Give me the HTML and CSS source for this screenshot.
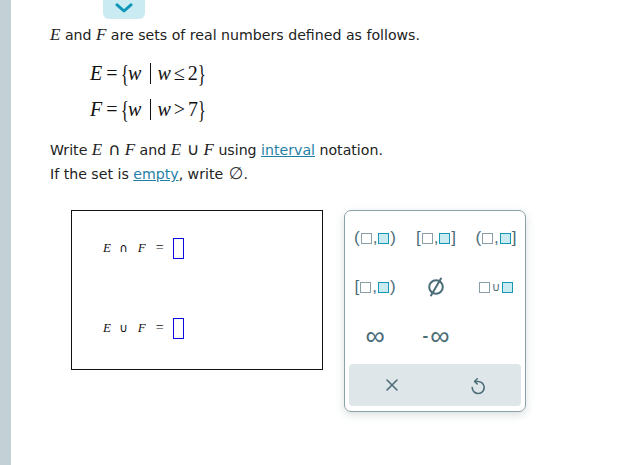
FILE: index.html
```html
<!DOCTYPE html>
<html>
<head>
<meta charset="utf-8">
<link rel="stylesheet" href="styles.css">
</head>
<body>
<div class="page">
  <div class="sidebar"></div>
  <div class="content">
    <div class="tab">
      <svg width="20" height="10" viewBox="0 0 20 10"><path d="M3 1.8 L10 8 L17 1.8" fill="none" stroke="#0e97b8" stroke-width="3" stroke-linecap="round" stroke-linejoin="round"/></svg>
    </div>
    <p class="line first"><span class="mi">E</span> and <span class="mi">F</span> are sets of real numbers defined as follows.</p>
    <div class="defs">
      <div class="def"><span class="mi">E</span><span class="mo">=</span><span class="br">{</span><span class="mi">w</span><span class="bar"></span><span class="mi">w</span><span class="mo rel">≤</span><span class="mn">2</span><span class="br">}</span></div>
      <div class="def"><span class="mi">F</span><span class="mo">=</span><span class="br">{</span><span class="mi">w</span><span class="bar"></span><span class="mi">w</span><span class="mo rel">&gt;</span><span class="mn">7</span><span class="br">}</span></div>
    </div>
    <p class="line">Write <span class="mi">E</span><span class="op">∩</span><span class="mi">F</span> and <span class="mi">E</span><span class="op">∪</span><span class="mi">F</span> using <a class="link">interval</a> notation.</p>
    <p class="line">If the set is <a class="link">empty</a>, write <span class="empty">∅</span>.</p>
    <div class="work">
      <div class="answers">
        <div class="ans"><span class="ami">E</span><span class="aop">∩</span><span class="ami">F</span><span class="aeq">=</span><span class="slot"></span></div>
        <div class="ans"><span class="ami">E</span><span class="aop">∪</span><span class="ami">F</span><span class="aeq">=</span><span class="slot"></span></div>
      </div>
      <div class="pad">
        <div class="keys">
          <div class="key">(<span class="sq"></span>,<span class="sq on"></span>)</div>
          <div class="key">[<span class="sq"></span>,<span class="sq on"></span>]</div>
          <div class="key">(<span class="sq"></span>,<span class="sq on"></span>]</div>
          <div class="key">[<span class="sq"></span>,<span class="sq on"></span>)</div>
          <div class="key"><svg width="22" height="22" viewBox="0 0 22 22"><circle cx="11" cy="11" r="6.8" fill="none" stroke="#4b6d78" stroke-width="2"/><path d="M16 2.5 L6 19.5" stroke="#4b6d78" stroke-width="2" stroke-linecap="round"/></svg></div>
          <div class="key"><span class="sq"></span><span class="cup">∪</span><span class="sq on"></span></div>
          <div class="key inf">∞</div>
          <div class="key inf"><span class="minus">-</span>∞</div>
          <div class="key"></div>
        </div>
        <div class="actions">
          <div class="act"><svg width="14" height="14" viewBox="0 0 14 14"><path d="M2 2 L12 12 M12 2 L2 12" stroke="#4b6d78" stroke-width="1.6" stroke-linecap="round"/></svg></div>
          <div class="act"><svg width="16" height="20" viewBox="0 0 16 20"><path d="M2.2 12.5 A6 6 0 1 0 7.5 6.5 H5" fill="none" stroke="#4b6d78" stroke-width="1.6" stroke-linecap="round"/><path d="M7.2 3.8 L4.6 6.5 L7.2 9" fill="none" stroke="#4b6d78" stroke-width="1.6" stroke-linecap="round" stroke-linejoin="round"/></svg></div>
        </div>
      </div>
    </div>
  </div>
</div>
</body>
</html>
```
FILE: styles.css
```css
html, body { margin: 0; padding: 0; background: #fff; }
.page { display: flex; width: 628px; height: 465px; overflow: hidden; }
.sidebar { width: 11px; background: #c3d0d6; flex: none; }
.content { flex: 1; padding-left: 39px; font-family: "DejaVu Sans", Verdana, sans-serif; font-size: 14.15px; color: #222; }
.tab { width: 42px; height: 19px; margin-left: 53px; background: #caebf2; border-radius: 0 0 6px 6px; display: flex; justify-content: center; align-items: center; }
.tab svg { margin-top: -3px; }
.line { margin: 0; height: 24px; line-height: 24px; white-space: nowrap; }
.line.first { margin-top: 4px; }
.mi { font-family: "Liberation Serif", "Times New Roman", serif; font-style: italic; font-size: 17px; }
.op { font-family: "DejaVu Sans", sans-serif; font-size: 17px; margin: 0 4px 0 6px; }
.defs { margin: 12px 0 14px 40px; display: flex; flex-direction: column; gap: 8px; }
.def { height: 28px; display: flex; align-items: center; font-family: "Liberation Serif", serif; font-size: 20px; color: #111; }
.def .mi { font-size: 20px; }
.def .mo { margin: 0 3px 0 4px; }
.def .mo.rel { margin: 0 3px 0 3px; }
.def .br { font-size: 20px; display: inline-block; transform: scale(0.85, 1.25); margin: 0 -1px; }
.def .bar { display: inline-block; width: 1px; height: 21px; background: #111; margin: 0 6px 0 9px; }
.link { color: #1f7fa6; text-decoration: underline; }
.empty { font-family: "DejaVu Sans", sans-serif; font-size: 17px; color: #333; margin-left: 1px; }
.work { display: flex; align-items: flex-start; margin-top: 25px; margin-left: 21px; gap: 21px; }
.answers { width: 252px; height: 160px; flex: none; border: 1px solid #111; display: flex; flex-direction: column; padding: 26px 0 0 31px; box-sizing: border-box; gap: 58px; }
.ans { display: flex; align-items: center; height: 22px; font-family: "Liberation Serif", serif; font-size: 13px; color: #111; }
.ami { font-style: italic; }
.aop { margin: 0 10px 0 8px; font-family: "DejaVu Sans", sans-serif; font-size: 12px; }
.aeq { margin: 0 9px 0 10px; font-size: 14px; }
.slot { flex: none; width: 9px; height: 19px; border: 1px solid #0a0ae0; }
.pad { width: 182px; height: 202px; flex: none; box-sizing: border-box; border: 1px solid #8aa1a8; border-radius: 7px; box-shadow: 0 3px 8px rgba(80,110,120,0.22); padding: 15px 4px 5px 4px; display: flex; flex-direction: column; }
.keys { display: grid; grid-template-columns: 52px 70px 50px; grid-template-rows: 49px 49px 24px; }
.key { display: flex; justify-content: center; align-items: center; height: 24px; font-family: "Liberation Sans", sans-serif; font-size: 17px; color: #4b6d78; line-height: 24px; }
.sq { display: inline-block; width: 9px; height: 9px; border: 1.5px solid #8a9ea5; background: #fff; margin: 0 1px; }
.sq.on { border-color: #1797b6; background: #caebf2; }
.cup { font-family: "DejaVu Sans", sans-serif; font-size: 12px; margin: 0 1px; color: #4b6d78; }
.inf { font-family: "Liberation Sans", sans-serif; font-size: 27px; }
.minus { font-size: 17px; font-weight: bold; margin-right: 2px; }
.actions { margin-top: 16px; height: 44px; background: #dfe6e9; border-radius: 4px; display: grid; grid-template-columns: 86px 86px; align-items: center; }
.act { display: flex; justify-content: center; align-items: center; }
```
